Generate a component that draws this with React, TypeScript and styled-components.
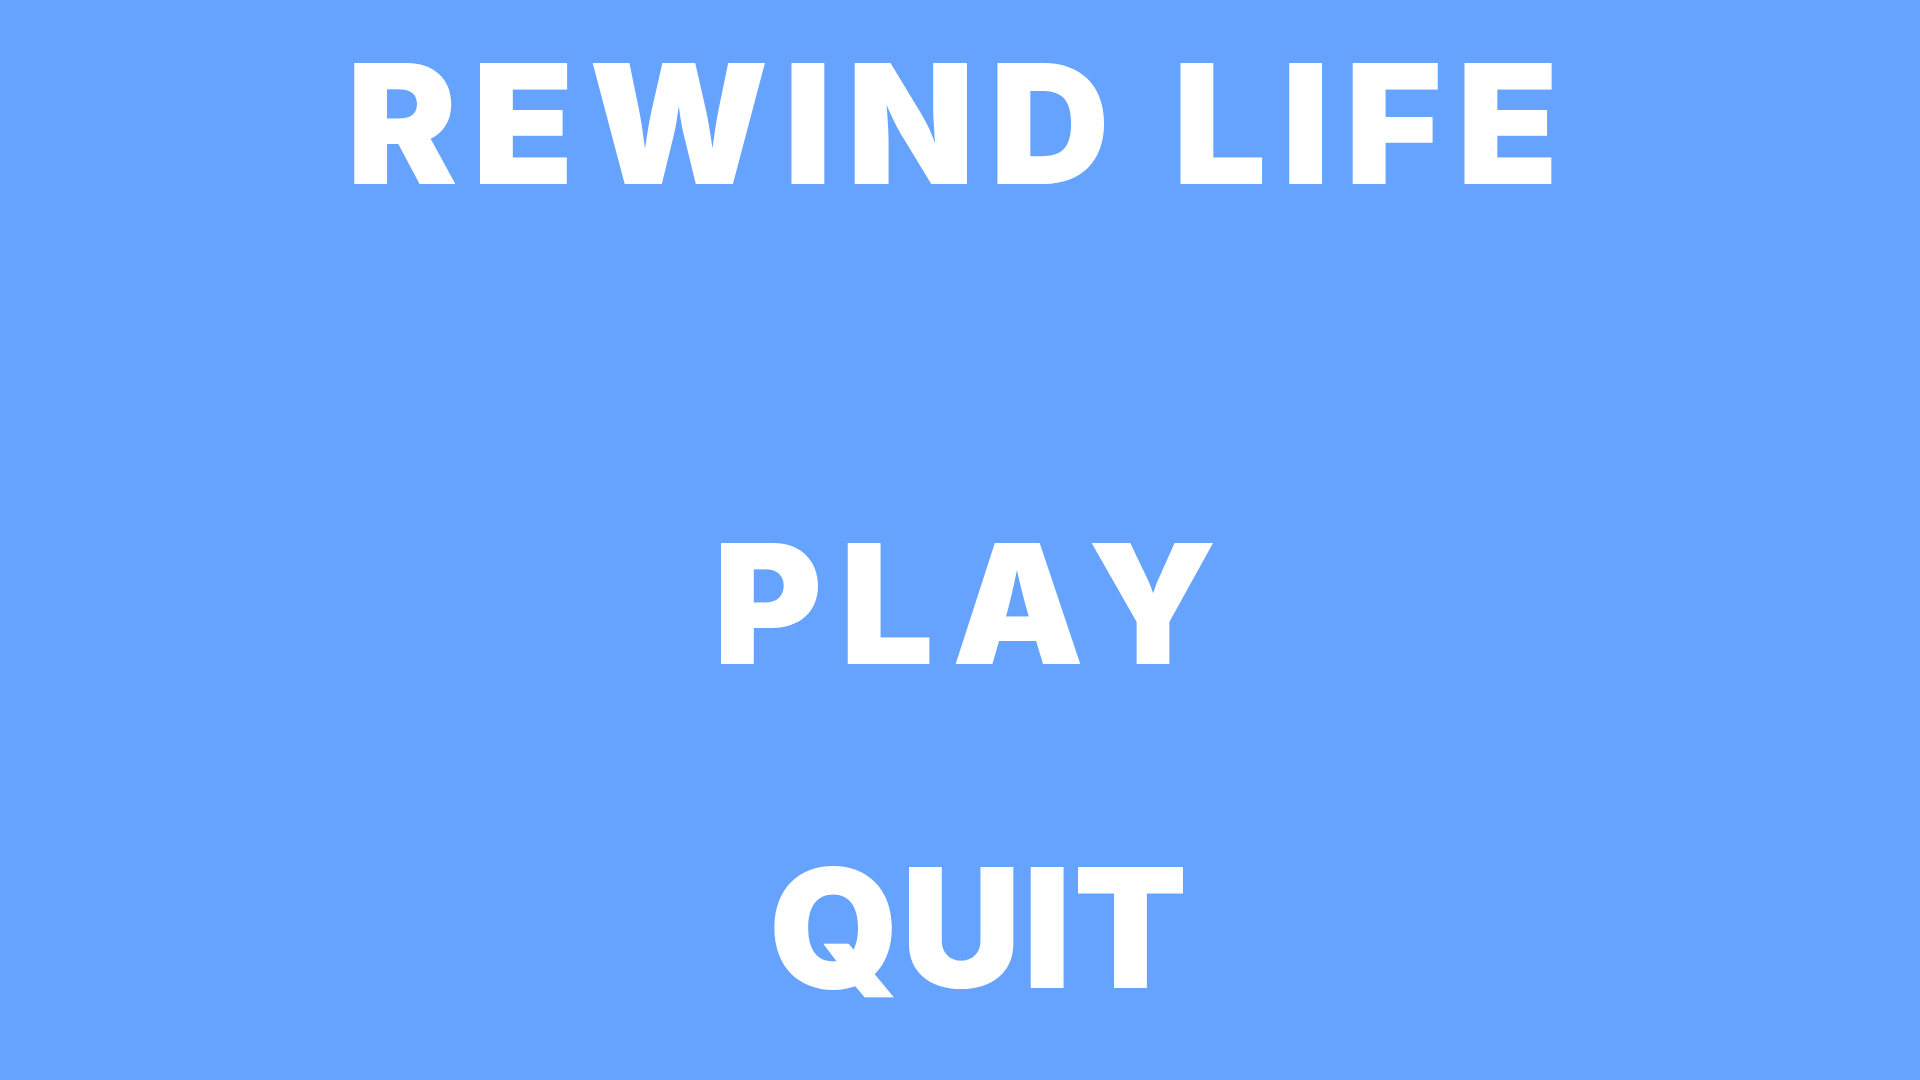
import styled, { createGlobalStyle } from "styled-components";

const GlobalStyle = createGlobalStyle`
    html, body {
        margin: 0;
        padding: 0;
        background: #66a3ff;
    }
`;

const Screen = styled.main`
    width: 100%;
    height: 100vh;
    background: #66a3ff;
    display: flex;
    flex-direction: column;
    align-items: center;
    font-family: Inter, "Noto Sans", sans-serif;
    color: #ffffff;
    overflow: hidden;
`;

const Title = styled.h1`
    margin: 41px 0 0 0;
    font-size: 166px;
    font-weight: 900;
    line-height: 1;
    letter-spacing: 15px;
    white-space: nowrap;
`;

const Menu = styled.nav`
    display: flex;
    flex-direction: column;
    align-items: center;
    gap: 158px;
    margin-top: 314px;
`;

const MenuButton = styled.button<{ $spacing: number; $shift?: number }>`
    border: none;
    background: none;
    padding: 0 0 0 ${(p) => p.$spacing + (p.$shift ?? 0)}px;
    color: inherit;
    font-family: inherit;
    font-size: 166px;
    font-weight: 900;
    line-height: 1;
    letter-spacing: ${(p) => p.$spacing}px;
    cursor: pointer;
`;

export default function App() {
    return (
        <>
            <GlobalStyle />
            <Screen>
                <Title>REWIND LIFE</Title>
                <Menu>
                    <MenuButton $spacing={18} $shift={10}>PLAY</MenuButton>
                    <MenuButton $spacing={2} $shift={36}>QUIT</MenuButton>
                </Menu>
            </Screen>
        </>
    );
}
